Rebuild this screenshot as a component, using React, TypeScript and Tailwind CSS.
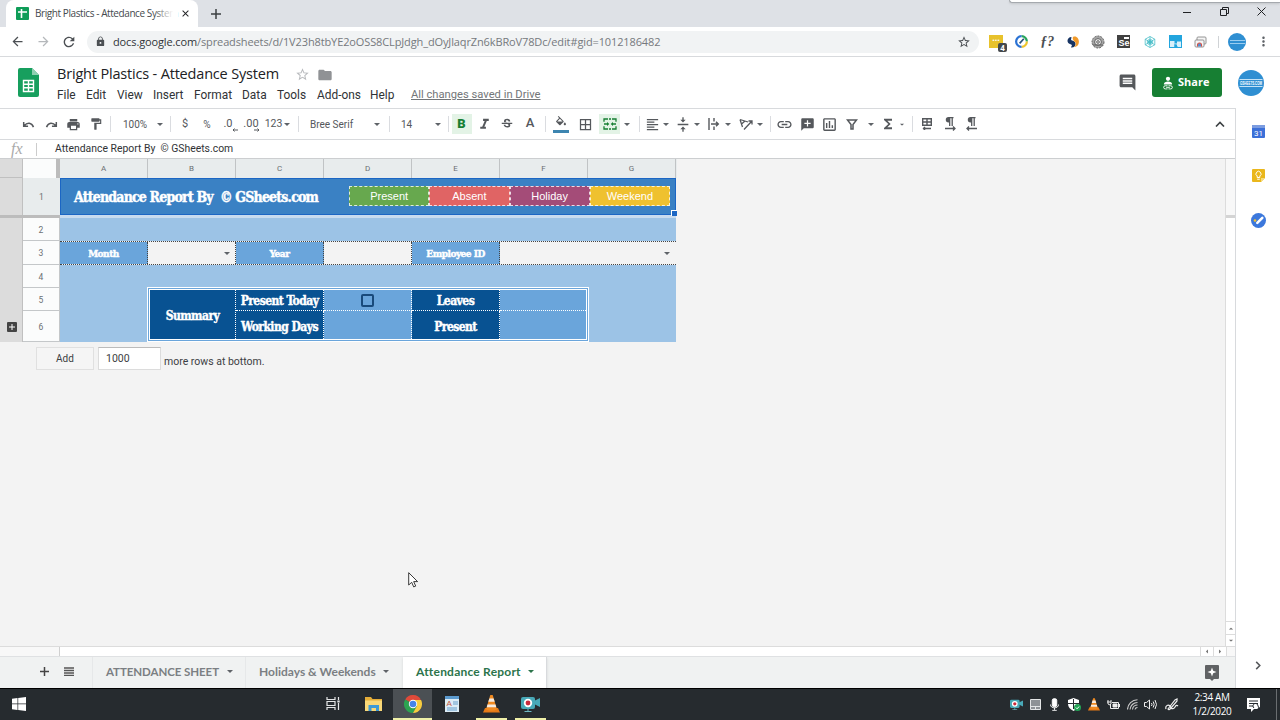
import type { ReactNode } from 'react';
import {
  MdAddComment,
  MdArrowBack,
  MdArrowForward,
  MdBorderAll,
  MdClose,
  MdComment,
  MdFolder,
  MdFormatAlignLeft,
  MdFormatItalic,
  MdFormatPaint,
  MdFunctions,
  MdInsertLink,
  MdLock,
  MdMoreVert,
  MdOutlineInsertChart,
  MdPrint,
  MdRefresh,
  MdStarBorder,
  MdStrikethroughS,
  MdVerticalAlignCenter,
} from 'react-icons/md';

const menus = [
  ['File', 'w-[29px]'],
  ['Edit', 'w-[31px]'],
  ['View', 'w-[36px]'],
  ['Insert', 'w-[41px]'],
  ['Format', 'w-[48px]'],
  ['Data', 'w-[35px]'],
  ['Tools', 'w-[40px]'],
  ['Add-ons', 'w-[53px]'],
  ['Help', 'w-[41px]'],
];

const legend = [
  ['Present', 'bg-[#67a84e]'],
  ['Absent', 'bg-[#e06464]'],
  ['Holiday', 'bg-[#a44c78]'],
  ['Weekend', 'bg-[#efc12f]'],
];

const slab = "font-['DejaVu_Serif_Condensed','DejaVu_Serif',serif] font-bold [-webkit-text-stroke:0.4px_white]";

function Cell({ w, children }: { w: string; children?: ReactNode }) {
  return <div className={`flex h-full shrink-0 items-center justify-center ${w}`}>{children}</div>;
}

function Caret({ className = 'text-[#5f6368]' }: { className?: string }) {
  return (
    <svg viewBox="0 0 6 3" className={`h-[3px] w-[6px] shrink-0 ${className}`}>
      <path d="M0 0h6L3 3z" fill="currentColor" />
    </svg>
  );
}

function Divider() {
  return <div className="h-4 w-px bg-[#dadce0]" />;
}

function Pilcrow({ arrow }: { arrow: string }) {
  return (
    <svg viewBox="0 0 12 14" className="h-[14px] w-3" fill="none" stroke="currentColor" strokeWidth="1.300">
      <path d="M6 0H4.500a2.700 2.700 0 0 0 0 5.400H6z" fill="currentColor" stroke="none" />
      <path d="M5.500.7H9.500M5.700 0v9M8.200 0v9" />
      <path d={arrow} />
    </svg>
  );
}

function BrowserTabs() {
  return (
    <div className="flex h-[27px] shrink-0 bg-[#dee1e6] pl-[6px]">
      <div className="flex h-full w-[192px] items-center rounded-t-lg bg-white pl-[10px] font-['Open_Sans',sans-serif] text-[10px] text-[#45494d]">
        <svg viewBox="0 0 13 13" className="mr-[6px] h-[13px] w-[13px] shrink-0">
          <rect width="13" height="13" rx="1" fill="#0f9d58" />
          <path d="M5.5 2v9M2 5h9" stroke="#fff" strokeWidth="1.6" />
        </svg>
        <div className="relative w-[142px] whitespace-nowrap tracking-[-0.42px]">
          Bright Plastics - Attedance System
          <div className="absolute inset-y-0 -right-px w-6 bg-gradient-to-l from-white from-20% to-transparent" />
        </div>
        <MdClose className="ml-[3px] h-[11px] w-[11px] text-[#202124]" />
      </div>
      <div className="flex w-9 items-center justify-center">
        <svg viewBox="0 0 10 10" className="h-[10px] w-[10px]">
          <path d="M5 0v10M0 5h10" stroke="#3c4043" strokeWidth="1.5" />
        </svg>
      </div>
      <div className="ml-auto flex items-center pr-[14px] pb-[4px] text-[#202124]">
        <svg viewBox="0 0 8 8" className="mr-[29px] h-2 w-2">
          <path d="M0 4.5h8" stroke="currentColor" />
        </svg>
        <svg viewBox="0 0 9 9" className="mr-[28px] h-[9px] w-[9px]" fill="none" stroke="currentColor">
          <path d="M.5 2.5h6v6h-6zM2.5 2.5v-2h6v6h-2" />
        </svg>
        <svg viewBox="0 0 9 9" className="h-[9px] w-[9px]">
          <path d="M.5.5l8 8M8.5.5l-8 8" stroke="currentColor" />
        </svg>
      </div>
    </div>
  );
}

function Extensions() {
  return (
    <div className="flex h-full items-center pr-[4.5px]">
      <Cell w="w-[25.6px]">
        <div className="relative h-[13px] w-[14px] bg-[#e8c22c] text-center text-[9px] leading-[10px] font-bold text-white">
          ···
          <span className="absolute top-[8px] left-[9px] h-[9px] w-[9px] rounded-[2px] bg-[#45494c] text-[8px] leading-[9px]">
            4
          </span>
        </div>
      </Cell>
      <Cell w="w-[25.6px]">
        <svg viewBox="0 0 14 14" className="h-[13px] w-[13px]" fill="none" strokeWidth="2.4">
          <path d="M7 1.2A5.8 5.8 0 0 1 12.8 7" stroke="#28a55b" />
          <path d="M12.8 7A5.8 5.8 0 0 1 7 12.8" stroke="#efc52d" />
          <path d="M7 12.8A5.8 5.8 0 0 1 7 1.2" stroke="#2a72d4" />
          <path d="M5 9l4.5-5" stroke="#284f78" strokeWidth="1.8" />
        </svg>
      </Cell>
      <Cell w="w-[25.6px]">
        <span className="font-['Liberation_Serif',serif] text-[14px] font-bold italic">ƒ?</span>
      </Cell>
      <Cell w="w-[25.6px]">
        <svg viewBox="0 0 12 12" className="h-3 w-3">
          <path d="M4.500 1C0 1-1 7 3 8l2 1-1 2.500c5 .5 6-5 2.500-6.500L4 4z" fill="#173463" />
          <path d="M6 1c4-2 7 3 5.500 7-1 3-4.500 3-4.500 3 2.500-2 2-4 1-5S5 3 6 1z" fill="#f19a2a" />
        </svg>
      </Cell>
      <Cell w="w-[25.6px]">
        <svg viewBox="0 0 14 14" className="h-[14px] w-[14px]" fill="none" stroke="#606060">
          <circle cx="7" cy="7" r="6" fill="#a5a5a5" strokeDasharray="2 1" />
          <circle cx="7" cy="7" r="3.4" fill="#eee" />
          <circle cx="7" cy="7" r="1.3" />
          <path d="M2 10h10" />
        </svg>
      </Cell>
      <Cell w="w-[25.6px]">
        <div className="relative h-[13px] w-[13px] bg-[#414141] font-['Liberation_Sans',sans-serif]">
          <span className="absolute bottom-0 left-[1px] text-[9px] leading-[9px] font-bold text-white">Se</span>
          <span className="absolute top-[2px] right-[1px] h-[2px] w-[5px] bg-white" />
        </div>
      </Cell>
      <Cell w="w-[25.6px]">
        <svg viewBox="0 0 12 12" className="h-3 w-3" fill="none" stroke="#4bbfc9">
          <circle cx="6" cy="6" r="1.5" fill="#4bbfc9" />
          <path d="M6 .5v11M1.2 3.2l9.6 5.6M1.2 8.8l9.6-5.6M6 .5l4.8 2.7v5.6L6 11.5 1.2 8.8V3.2zM6 3l2.6 1.5v3L6 9 3.4 7.5v-3z" strokeWidth=".8" />
        </svg>
      </Cell>
      <Cell w="w-[25.6px]">
        <svg viewBox="0 0 13 13" className="h-[13px] w-[13px]">
          <rect width="13" height="13" fill="#22a5de" />
          <path d="M1 6h4.500v2.500H8V6.500h4V12H8V9.500H5.500V12H1z" fill="#d9f0fa" />
          <path d="M5.500 8.500L9 12H5.500z" fill="#22a5de" />
        </svg>
      </Cell>
      <Cell w="w-[25.6px]">
        <svg viewBox="0 0 13 12" className="h-3 w-[13px]" stroke="#8b8b8b" strokeWidth=".9">
          <rect x="3" y="1" width="9" height="7" rx="1" fill="#f5f5f5" />
          <rect x="1" y="4" width="9" height="7" rx="1" fill="#f5f5f5" />
          <path d="M3.5 10.5V9a2 2 0 0 1 4 0v1.5" fill="#5090d8" stroke="#d85042" strokeWidth="1.1" />
        </svg>
      </Cell>
      <Cell w="w-[10px]">
        <div className="h-3 w-px bg-[#d0d3d6]" />
      </Cell>
      <Cell w="w-[27px]">
        <div className="flex h-[18px] w-[18px] flex-col items-center justify-center gap-[2px] rounded-full bg-[#2f8fd2]">
          <div className="h-px w-[15px] bg-[#9bcdf0]" />
          <div className="h-px w-[15px] bg-[#9bcdf0]" />
        </div>
      </Cell>
      <Cell w="w-[25px]">
        <MdMoreVert className="h-[15px] w-[15px] text-[#5f6368]" />
      </Cell>
    </div>
  );
}

function AddressBar() {
  return (
    <div className="flex h-[30px] shrink-0 items-center border-b border-[#d8dadd] bg-white pl-[10px] text-[#4b4f53]">
      <MdArrowBack className="h-[15px] w-[15px]" />
      <MdArrowForward className="ml-[11px] h-[15px] w-[15px] text-[#b5b8bb]" />
      <MdRefresh className="ml-[10px] h-[16px] w-[16px]" />
      <div className="ml-[10px] flex h-[22px] w-[892px] items-center rounded-full bg-[#f1f3f4] pl-[8px]">
        <MdLock className="mr-[7px] h-[11px] w-[11px]" />
        <span className="pt-px font-['Open_Sans',sans-serif] text-[11px] tracking-[-0.12px] whitespace-nowrap text-[#75797d]">
          <span className="text-[#303438]">docs.google.com</span>
          /spreadsheets/d/1V23h8tbYE2oOSS8CLpJdgh_dOyJlaqrZn6kBRoV78Dc/edit#gid=1012186482
        </span>
        <MdStarBorder className="mr-[8px] ml-auto h-[14px] w-[14px]" />
      </div>
      <div className="ml-auto h-full">
        <Extensions />
      </div>
    </div>
  );
}

function DocHeader() {
  return (
    <div className="flex h-[51px] shrink-0 items-start bg-white pl-[18px]">
      <svg viewBox="0 0 21 29" className="mt-[11px] h-[29px] w-[21px]">
        <path d="M2 0h12l7 7v20a2 2 0 0 1-2 2H2a2 2 0 0 1-2-2V2a2 2 0 0 1 2-2z" fill="#179f5e" />
        <path d="M14 0l7 7h-7z" fill="#8fd0b2" />
        <path d="M5.5 12.5h10v11h-10zM5.5 16.2h10M5.5 19.8h10M10.5 12.5v11" fill="none" stroke="#fff" strokeWidth="1.4" />
      </svg>
      <div className="ml-[18px] flex flex-col pt-[7px]">
        <div className="flex h-[21px] items-center">
          <span className="w-[238px] pb-px font-['Open_Sans',sans-serif] text-[14.5px] tracking-[-0.18px] whitespace-nowrap text-[#202124]">
            Bright Plastics - Attedance System
          </span>
          <MdStarBorder className="h-[15px] w-[15px] text-[#b8babd]" />
          <MdFolder className="ml-[7px] h-4 w-4 text-[#909295]" />
        </div>
        <div className="flex h-5 items-center pt-px font-['Roboto',sans-serif] text-[11.9px] text-[#303336]">
          {menus.map(([label, w]) => (
            <span key={label} className={`${w} whitespace-nowrap`}>
              {label}
            </span>
          ))}
          <span className="text-[11.2px] text-[#737679] underline">All changes saved in Drive</span>
        </div>
      </div>
      <div className="ml-auto flex h-full items-center pr-[16px]">
        <MdComment className="mr-[15px] h-[19px] w-[19px] text-[#55585b]" />
        <div className="flex h-[29px] w-[70px] items-center rounded-[3px] bg-[#177f33] pl-[10px] font-['Open_Sans',sans-serif] text-[11px] font-bold text-white">
          <svg viewBox="0 0 13 14" className="mr-[4px] h-[14px] w-[12px]">
            <circle cx="6.5" cy="2.5" r="2.3" fill="#fff" />
            <path d="M2 8.5c0-4 9-4 9 0z" fill="#fff" />
            <path d="M6 10H3.5a1.7 1.7 0 0 0 0 3.4H6M7 10h2.5a1.7 1.7 0 0 1 0 3.4H7M4.5 11.7h4" fill="none" stroke="#fff" />
          </svg>
          Share
        </div>
        <svg viewBox="0 0 26 26" className="ml-[16px] h-[26px] w-[26px]">
          <circle cx="13" cy="13" r="13" fill="#2f8fd2" />
          <path d="M1.500 9.500h23M1.500 16.500h23" stroke="#d6ebf9" strokeWidth=".9" />
          <text x="2" y="14.800" fill="#fff" fontSize="4.500" fontWeight="700" fontFamily="Liberation Sans" textLength="22" lengthAdjust="spacingAndGlyphs">
            GSHEETS.COM
          </text>
        </svg>
      </div>
    </div>
  );
}

function Toolbar() {
  const icon = 'h-[15px] w-[15px]';
  return (
    <div className="flex h-[32px] shrink-0 items-center border-y border-[#d8dadd] bg-white pl-4 font-['Roboto',sans-serif] text-[11px] text-[#55585c]">
      <Cell w="w-6">
        <svg viewBox="0 0 13 8" className="h-[7px] w-[13px]" fill="none" stroke="currentColor" strokeWidth="1.7">
          <path d="M1 1v5h5M1.5 5.5C5 1.500 10 1.500 12.200 7" />
        </svg>
      </Cell>
      <Cell w="w-[22px]">
        <svg viewBox="0 0 13 8" className="h-[7px] w-[13px]" fill="none" stroke="currentColor" strokeWidth="1.7">
          <path d="M12 1v5H7M11.500 5.500C8 1.500 3 1.500.8 7" />
        </svg>
      </Cell>
      <Cell w="w-[23px]"><MdPrint className={icon} /></Cell>
      <Cell w="w-[22px]"><MdFormatPaint className="h-[14px] w-[14px]" /></Cell>
      <Cell w="w-[6px]"><Divider /></Cell>
      <Cell w="w-[44px]"><span className="text-[10px]">100%</span></Cell>
      <Cell w="w-[6px]"><Caret /></Cell>
      <Cell w="w-[14px]"><Divider /></Cell>
      <Cell w="w-[16px]">$</Cell>
      <Cell w="w-[28px]"><span className="text-[10px]">%</span></Cell>
      <Cell w="w-[16px]">
        <div className="relative pr-[2px] text-[11px]">
          .0
          <svg viewBox="0 0 6 4" className="absolute right-[-3px] bottom-0 h-1 w-[6px]">
            <path d="M6 2H1M2.500.5L1 2l1.500 1.500" fill="none" stroke="currentColor" />
          </svg>
        </div>
      </Cell>
      <Cell w="w-[28px]">
        <div className="relative text-[11px]">
          .00
          <svg viewBox="0 0 6 4" className="absolute right-[-1px] bottom-0 h-1 w-[6px]">
            <path d="M0 2h5M3.500.5L5 2 3.500 3.500" fill="none" stroke="currentColor" />
          </svg>
        </div>
      </Cell>
      <Cell w="w-[17px]"><span className="text-[10.5px]">123</span></Cell>
      <Cell w="w-[9px]"><Caret /></Cell>
      <Cell w="w-[15px]"><Divider /></Cell>
      <div className="w-[60px] pl-[4px] text-[10px]">Bree Serif</div>
      <Cell w="w-[22px]"><Caret /></Cell>
      <Cell w="w-[2px]"><Divider /></Cell>
      <div className="w-[38px] pl-[11px] text-[10px]">14</div>
      <Cell w="w-[19px]"><Caret /></Cell>
      <Cell w="w-[2px]"><Divider /></Cell>
      <Cell w="w-[25px]">
        <div className="flex h-5 w-5 items-center justify-center bg-[#e3f3e6] text-[13px] font-black text-[#177f33]">B</div>
      </Cell>
      <Cell w="w-[21px]"><MdFormatItalic className="h-[17px] w-[17px]" /></Cell>
      <Cell w="w-6"><MdStrikethroughS className="h-[14px] w-[14px]" /></Cell>
      <Cell w="w-[22px]"><span className="pb-[2px] text-[13px] font-medium">A</span></Cell>
      <Cell w="w-[9px]"><Divider /></Cell>
      <Cell w="w-[22px]">
        <div className="flex w-4 flex-col items-center">
          <svg viewBox="0 0 24 20" className="h-[11px] w-[14px]" fill="currentColor">
            <path d="M16.560 8.940L7.620 0 6.210 1.410l2.380 2.380-5.150 5.150c-.59.590-.59 1.540 0 2.120l5.500 5.500c.29.290.68.440 1.060.440s.77-.15 1.060-.44l5.500-5.500c.59-.58.59-1.530 0-2.120zM5.210 10L10 5.210 14.790 10zM19 11.500s-2 2.170-2 3.500c0 1.100.9 2 2 2s2-.9 2-2c0-1.330-2-3.500-2-3.500z" />
          </svg>
          <div className="mt-[3px] h-[3px] w-4 bg-[#3d85b0]" />
        </div>
      </Cell>
      <Cell w="w-[27px]"><MdBorderAll className={icon} /></Cell>
      <Cell w="w-[21px]">
        <div className="flex h-5 w-full items-center justify-center bg-[#e3f3e6] text-[#177f33]">
          <svg viewBox="0 0 14 12" className="h-3 w-[14px]" fill="none" stroke="currentColor" strokeWidth="1.300">
            <path d="M1 3.800V1h4M9 1h4v2.800M1 8.200V11h4M9 11h4V8.200M1 6h4M13 6H9M6 1h2M6 11h2" />
            <path d="M4 4l2.300 2L4 8zM10 4L7.700 6 10 8z" fill="currentColor" stroke="none" />
          </svg>
        </div>
      </Cell>
      <Cell w="w-[14px]"><Caret /></Cell>
      <Cell w="w-[10px]"><Divider /></Cell>
      <Cell w="w-4"><MdFormatAlignLeft className={icon} /></Cell>
      <Cell w="w-[11px]"><Caret /></Cell>
      <div className="w-1" />
      <Cell w="w-4"><MdVerticalAlignCenter className="h-[17px] w-[17px]" /></Cell>
      <Cell w="w-[11px]"><Caret /></Cell>
      <div className="w-1" />
      <Cell w="w-4">
        <svg viewBox="0 0 12 12" className="h-3 w-3" fill="none" stroke="currentColor" strokeWidth="1.400">
          <path d="M1 0v12M6 0v3.500M6 8.500V12M3 6h7M8 3.800L10.300 6 8 8.200" />
        </svg>
      </Cell>
      <Cell w="w-[11px]"><Caret /></Cell>
      <div className="w-[5px]" />
      <Cell w="w-4">
        <svg viewBox="0 0 14 12" className="h-3 w-[14px]" fill="none" stroke="currentColor" strokeWidth="1.300">
          <path d="M1 1.500l8 2.500M1 1.500L3.500 9M6 3L2.500 6M5 11.500L12.500 3.500M9.500 3h3.500v3.500" />
        </svg>
      </Cell>
      <Cell w="w-[11px]"><Caret /></Cell>
      <Cell w="w-[10px]"><Divider /></Cell>
      <Cell w="w-[19px]"><MdInsertLink className="h-[17px] w-[17px]" /></Cell>
      <Cell w="w-[26px]"><MdAddComment className={`${icon} -scale-x-100`} /></Cell>
      <Cell w="w-[19px]"><MdOutlineInsertChart className="h-[17px] w-[17px]" /></Cell>
      <Cell w="w-[26px]">
        <svg viewBox="0 0 12 11" className="h-[11px] w-3" fill="none" stroke="currentColor" strokeWidth="1.500">
          <path d="M1.500 1h9L7 5.500V10H5V5.500z" />
        </svg>
      </Cell>
      <Cell w="w-[12px]"><Caret /></Cell>
      <Cell w="w-[21px]"><MdFunctions className="h-4 w-4" /></Cell>
      <Cell w="w-2"><Caret className="scale-75 text-[#5f6368]" /></Cell>
      <Cell w="w-3"><Divider /></Cell>
      <Cell w="w-[18px]">
        <svg viewBox="0 0 10 12" className="h-3 w-[10px]" fill="none" stroke="currentColor" strokeWidth="1.400">
          <path d="M.7.7h8.600v6.600H.7zM.7 4h8.600M5 .7V7M1 10.500h8M3 9l-1.500 1.500L3 12" />
        </svg>
      </Cell>
      <Cell w="w-[27px]"><Pilcrow arrow="M1 11.500h10M9 9.500l2 2-2 2" /></Cell>
      <Cell w="w-[17px]"><Pilcrow arrow="M1 11.500h10M3 9.500l-2 2 2 2" /></Cell>
      <svg viewBox="0 0 10 6" className="mr-[10px] ml-auto h-[6px] w-[10px]" fill="none" stroke="#3c4043" strokeWidth="1.600">
        <path d="M1 5.500l4-4 4 4" />
      </svg>
    </div>
  );
}

function RowHead({ children }: { children: ReactNode }) {
  return (
    <div className="flex items-center justify-center border-r border-b border-[#c4c7c9] bg-[#fbfcfc] pt-[2px] text-[8.5px] text-[#6b6f73]">
      {children}
    </div>
  );
}

function Sheet() {
  return (
    <div className="grid w-[677px] grid-cols-[23px_37px_617px] grid-rows-[19px_37px_3px_23px_24px_23px_23px_31px] font-['Roboto',sans-serif]">
      <div className="border-r border-b border-[#c0c0c0] bg-[#dcdcdc]" />
      <div className="border-r-4 border-[#bcbcbc] bg-[#fbfcfc]" />
      <div className="flex bg-[#e8eced]">
        {'ABCDEFG'.split('').map((c) => (
          <div key={c} className="flex w-[88px] items-center justify-center border-r border-[#c0c3c5] text-[8px] text-[#6b6f73]">
            {c}
          </div>
        ))}
      </div>

      <div className="border-r border-[#c0c0c0] bg-[#dcdcdc]" />
      <div className="flex items-center justify-center bg-[#e8eced] pt-px text-[8.5px] text-[#6b6f73]">1</div>
      <div className="relative flex w-[616px] items-center border border-[#1b66c4] bg-[#3a81c4] pl-[13px]">
        <span className={`${slab} w-[275px] pt-[2px] text-[14px] tracking-[-0.81px] whitespace-pre text-white`}>
          {'Attendance Report By  © GSheets.com'}
        </span>
        <div className="mb-px flex h-5 w-[321px] font-['Liberation_Sans',sans-serif] text-[11px] text-white">
          {legend.map(([label, bg]) => (
            <div key={label} className={`flex flex-1 items-center justify-center border border-dashed border-white/80 ${bg}`}>
              {label}
            </div>
          ))}
        </div>
        <div className="absolute -right-[2px] -bottom-[2px] z-10 h-[6px] w-[6px] border-t border-l border-white bg-[#1b66c4]" />
      </div>

      <div className="col-span-2 bg-[#bcbcbc]" />
      <div className="w-[616px] bg-[#c7dbef]" />

      <div className="border-r border-[#c0c0c0] bg-[#dcdcdc]" />
      <RowHead>2</RowHead>
      <div className="w-[616px] bg-[#9cc3e6]" />

      <div className="border-r border-[#c0c0c0] bg-[#dcdcdc]" />
      <RowHead>3</RowHead>
      <div className={`${slab} flex w-[616px] border-y border-dotted border-[#444] bg-[#f3f3f3] text-[10px] tracking-[-0.5px] text-white`}>
        <Cell w="w-[88px] bg-[#6aa5db] border-r border-dotted border-[#444]">Month</Cell>
        <div className="flex w-[88px] items-center justify-end border-r border-dotted border-[#444] pr-[5px]"><Caret /></div>
        <Cell w="w-[88px] bg-[#6aa5db] border-r border-dotted border-[#444]">Year</Cell>
        <Cell w="w-[88px] border-r border-dotted border-[#444]" />
        <Cell w="w-[88px] bg-[#6aa5db] border-r border-dotted border-[#444]">Employee ID</Cell>
        <div className="flex flex-1 items-center justify-end pr-[6px]"><Caret /></div>
      </div>

      <div className="border-r border-[#c0c0c0] bg-[#dcdcdc]" />
      <RowHead>4</RowHead>
      <div className="w-[616px] bg-[#9cc3e6]" />

      <div className="row-span-2 flex items-end justify-center border-r border-[#c0c0c0] bg-[#dcdcdc] pb-[10px] pl-px">
        <svg viewBox="0 0 10 10" className="h-[10px] w-[10px]">
          <rect width="10" height="10" rx="1" fill="#444" />
          <path d="M5 2v6M2 5h6" stroke="#fff" />
        </svg>
      </div>
      <RowHead>5</RowHead>
      <div className="row-span-2 w-[616px] bg-[#9cc3e6] pl-[87px]">
        <div className={`${slab} -mt-px grid h-[55px] w-[442px] grid-cols-[86px_88px_88px_88px_86px] grid-rows-[21px_28px] border-3 border-double border-white bg-[#6aa5db] text-[12px] tracking-[-0.55px] whitespace-nowrap text-white`}>
          <div className="row-span-2 flex items-center justify-center border-r border-dotted border-white bg-[#085292] pt-[2px]">Summary</div>
          <div className="flex items-center justify-center border-r border-b border-dotted border-white bg-[#085292] pt-px">Present Today</div>
          <div className="flex items-center justify-center border-r border-b border-dotted border-white">
            <div className="h-[13px] w-[13px] rounded-[2px] border-2 border-[#194a7b]" />
          </div>
          <div className="flex items-center justify-center border-r border-b border-dotted border-white bg-[#085292] pt-px">Leaves</div>
          <div className="border-b border-dotted border-white" />
          <div className="flex items-center justify-center border-r border-dotted border-white bg-[#085292] pt-[3px]">Working Days</div>
          <div className="border-r border-dotted border-white" />
          <div className="flex items-center justify-center border-r border-dotted border-white bg-[#085292] pt-[3px]">Present</div>
        </div>
      </div>
      <RowHead>6</RowHead>
    </div>
  );
}

function SidePanel() {
  return (
    <div className="flex w-[45px] shrink-0 flex-col items-center border-l border-[#d8dadd] bg-white pt-[17px]">
      <svg viewBox="0 0 13 13" className="h-[13px] w-[13px]">
        <rect width="13" height="13" rx="1" fill="#3c70d8" />
        <path d="M0 0h13v3H0z" fill="#7c9ce0" />
        <text x="6.500" y="10.500" fill="#fff" fontSize="8" textAnchor="middle" fontFamily="Roboto">31</text>
      </svg>
      <svg viewBox="0 0 13 13" className="mt-[31px] h-[13px] w-[13px]">
        <path d="M1 0h11a1 1 0 0 1 1 1v8l-4 4H1a1 1 0 0 1-1-1V1a1 1 0 0 1 1-1z" fill="#eab71c" />
        <path d="M13 9l-4 4V9z" fill="#f7dc7b" />
        <path d="M5.200 8.500V7a2.500 2.500 0 1 1 2.600 0v1.500zM5.200 10.200h2.600" fill="none" stroke="#fff" />
      </svg>
      <svg viewBox="0 0 15 15" className="mt-[31px] h-[15px] w-[15px]">
        <circle cx="7.500" cy="7.500" r="7.500" fill="#3c78dc" />
        <circle cx="4" cy="7.500" r="1.300" fill="#f3c12d" />
        <path d="M6.300 9.800l5-5" stroke="#fff" strokeWidth="2.600" strokeLinecap="round" />
      </svg>
      <svg viewBox="0 0 6 10" className="mt-auto mb-[18px] h-[9px] w-[6px]" fill="none" stroke="#55585b" strokeWidth="1.700">
        <path d="M1 1l4 4-4 4" />
      </svg>
    </div>
  );
}

function SheetTabs() {
  return (
    <div className="flex h-[32px] shrink-0 items-center border-t border-[#dfe1e3] bg-[#f0f2f2] pl-[40px] font-['Lato',sans-serif] text-[12px] font-bold text-[#7b7f83]">
      <svg viewBox="0 0 9 9" className="mb-[3px] h-[9px] w-[9px]"><path d="M4.500 0v9M0 4.500h9" stroke="#444" strokeWidth="1.500" /></svg>
      <svg viewBox="0 0 10 9" className="mb-[2px] ml-[15px] h-[9px] w-[10px]"><path d="M0 1h10M0 3.500h10M0 6h10M0 8.300h10" stroke="#555" strokeWidth="1.300" /></svg>
      <div className="ml-[18px] flex h-full w-[153px] items-center border-l border-[#e6e8e9] pb-[2px] pl-[13px]">
        <span className="w-[121px] text-[11.5px] tracking-[-0.07px] whitespace-nowrap">ATTENDANCE SHEET</span>
        <Caret />
      </div>
      <div className="flex h-full w-[158px] items-center border-l border-[#e6e8e9] pb-[2px] pl-[13px]">
        <span className="w-[124px] whitespace-nowrap">Holidays &amp; Weekends</span>
        <Caret />
      </div>
      <div className="flex h-full w-[144px] items-center border-r border-[#d8dadd] bg-white pb-[2px] pl-[13px] text-[#2c744b] shadow-sm">
        <span className="w-[112px] tracking-[0.22px] whitespace-nowrap">Attendance Report</span>
        <Caret className="text-[#2c744b]" />
      </div>
      <svg viewBox="0 0 14 16" className="mr-[16px] ml-auto h-4 w-[14px]">
        <path d="M1 0h12a1 1 0 0 1 1 1v12a1 1 0 0 1-1 1H9l-2 2-2-2H1a1 1 0 0 1-1-1V1a1 1 0 0 1 1-1z" fill="#606264" />
        <path d="M7 2.500l1.200 3.300 3.300 1.200-3.300 1.200L7 11.500 5.800 8.200 2.500 7l3.300-1.200z" fill="#fff" />
      </svg>
    </div>
  );
}

function Cone({ className }: { className: string }) {
  return (
    <svg viewBox="0 0 17 18" className={className}>
      <path d="M2 13h13l2 4.500H0z" fill="#e67a17" />
      <path d="M7.300 0h2.400L14 14.500Q8.500 17 3 14.500z" fill="#f08a20" />
      <path d="M6.400 3.500h4.200l1.100 3.300H5.300zM4.500 9.500h8l.8 2.800H3.700z" fill="#f5ece2" />
    </svg>
  );
}

function Camera({ className }: { className: string }) {
  return (
    <svg viewBox="0 0 19 16" className={className}>
      <rect x="0" y="1" width="14" height="12" rx="2" fill="#48a9b8" />
      <path d="M13 5l6-3v9l-6-3z" fill="#48a9b8" />
      <circle cx="7" cy="7" r="4.200" fill="#fff" />
      <circle cx="7" cy="7" r="2.400" fill="#c92b3c" />
      <path d="M3.500 15.500h7M7 13v3" stroke="#6fb9c5" />
    </svg>
  );
}

function Taskbar() {
  const app = 'relative flex h-full w-[39.3px] items-center justify-center pb-[2px]';
  return (
    <div className="flex h-8 shrink-0 items-center border-t border-black bg-[#262b2f] text-white">
      <svg viewBox="0 0 14 14" className="mb-[2px] ml-[12px] h-[14px] w-[14px]" fill="#fff">
        <path d="M0 1.800l5.500-.8v5.600H0zM6.200.9L14 0v6.600H6.200zM0 7.300h5.500V13L0 12.200zM6.200 7.300H14V14l-7.800-1z" />
      </svg>
      <div className="ml-[288.5px] flex h-full">
        <div className={`${app} pr-[3px]`}>
          <svg viewBox="0 0 14 13" className="h-[13px] w-[14px]" fill="none" stroke="#e5e7e8" strokeWidth="1.200">
            <path d="M1 0v2.500h8V0M1 13v-2.500h8V13M1 4.500h8v4H1zM12.500 0v3M12.500 6v7" />
            <path d="M11.300 4.500h2.400" strokeWidth="2" />
          </svg>
        </div>
        <div className={app}>
          <svg viewBox="0 0 17 15" className="h-[15px] w-[17px]">
            <path d="M0 1h6l1.500 2H17v12H0z" fill="#e4ad39" />
            <path d="M0 4.500h17V15H0z" fill="#f9d878" />
            <path d="M3.500 15V9h10.500v6h-3v-3h-4.500v3z" fill="#3d9ad6" />
          </svg>
        </div>
        <div className={`${app} bg-[#4b5054]`}>
          <svg viewBox="0 0 18 18" className="h-[18px] w-[18px]">
            <path d="M9 9L1.200 4.500A9 9 0 0 1 16.800 4.500z" fill="#df4a3a" />
            <path d="M9 9L1.200 4.500A9 9 0 0 0 9 18l4-6.700z" fill="#2da350" />
            <path d="M9 9V5h8.100A9 9 0 0 1 9 18l3.900-7z" fill="#f7cc3f" />
            <circle cx="9" cy="9" r="4.200" fill="#fff" />
            <circle cx="9" cy="9" r="3.300" fill="#4584ea" />
          </svg>
          <div className="absolute inset-x-0 bottom-0 h-[2px] bg-[#eff0a8]" />
        </div>
        <div className={app}>
          <svg viewBox="0 0 14 16" className="h-4 w-[14px]">
            <rect width="14" height="16" fill="#dcecf6" />
            <path d="M0 0h14v3H0z" fill="#5c9bcf" />
            <path d="M8 6h5M8 8h5M2 12h10M2 14h10" stroke="#659dcb" />
            <text x="1.500" y="10" fill="#c65b3c" fontSize="8" fontFamily="Liberation Sans">A</text>
          </svg>
        </div>
        <div className={app}>
          <Cone className="h-[18px] w-[17px]" />
          <div className="absolute inset-x-[4px] bottom-0 h-[2px] bg-[#eff0a8]" />
        </div>
        <div className={app}>
          <Camera className="h-4 w-[19px]" />
          <div className="absolute inset-x-[4px] bottom-0 h-[2px] bg-[#eff0a8]" />
        </div>
      </div>

      <div className="ml-auto flex h-full items-center">
        <Cell w="w-[20px]"><Camera className="h-[11px] w-[13px]" /></Cell>
        <Cell w="w-[19px]">
          <svg viewBox="0 0 11 11" className="h-[11px] w-[11px]"><path d="M.5.5h10v10H.5z" fill="#8e9296" stroke="#e3e5e6" /><path d="M1 7.500h9M5.500 8v2" stroke="#e3e5e6" /></svg>
        </Cell>
        <Cell w="w-[19px]">
          <svg viewBox="0 0 10 14" className="h-[13px] w-[9px]" fill="none" stroke="#fff">
            <rect x="2.500" y=".5" width="5" height="9" rx="2" fill="#fff" />
            <path d="M.5 7c0 5 9 5 9 0M5 10.500V13M2.500 13.500h5" />
          </svg>
        </Cell>
        <Cell w="w-[20px]">
          <svg viewBox="0 0 13 13" className="h-[13px] w-[13px]">
            <path d="M5.500 0l5.500 2v4c0 3-2 5-5.500 7C2 11 0 9 0 6V2z" fill="#fff" />
            <path d="M5.500 1v10M0 5.500h11" stroke="#262b2f" />
            <circle cx="9.500" cy="9.500" r="3.500" fill="#23a455" />
            <path d="M7.800 9.500l1.300 1.300 2-2.300" fill="none" stroke="#fff" />
          </svg>
        </Cell>
        <Cell w="w-[19px]"><Cone className="h-[13px] w-[12px]" /></Cell>
        <Cell w="w-[20px]">
          <svg viewBox="0 0 13 10" className="h-[10px] w-[13px]" fill="none" stroke="#eee">
            <path d="M5 2.500h6.500v6H3.500V5M12.500 4v3M0 2h4M1 0v4l2 1 1-1V0" />
            <path d="M6 4h4v3H6z" fill="#eee" />
          </svg>
        </Cell>
        <Cell w="w-[18px]">
          <svg viewBox="0 0 11 11" className="h-[11px] w-[11px]" fill="none" stroke="#ccc" strokeWidth="1.100">
            <path d="M.5 10.500A10 10 0 0 1 10.500.8M3 10.500a7.500 7.500 0 0 1 7.500-7M5.500 10.500a5 5 0 0 1 5-4.500M8 10.500a2.500 2.500 0 0 1 2.500-2" />
          </svg>
        </Cell>
        <Cell w="w-[18px]">
          <svg viewBox="0 0 13 11" className="h-[11px] w-[13px]" fill="none" stroke="#eee">
            <path d="M.5 3.500h2L5.500 1v9L2.500 7.500h-2zM7.500 4q1 1.500 0 3M9.200 2.500q2 3 0 6M11 1q3 4.500 0 9" />
          </svg>
        </Cell>
        <Cell w="w-[26px]">
          <svg viewBox="0 0 14 13" className="h-[13px] w-[14px]" fill="none" stroke="#eee" strokeWidth="1.200">
            <path d="M1 11c-1-3 2-5 4-3s-1 5-2 3L10 2l2-1v2L6 10c1 1 3 1 4-1s2-2 3-1" />
          </svg>
        </Cell>
        <div className="w-[54px] pb-[2px] text-center font-['Open_Sans',sans-serif] text-[10px] leading-[14px] tracking-[-0.36px] whitespace-nowrap">
          <div>2:34 AM</div>
          <div>1/2/2020</div>
        </div>
        <Cell w="w-[30px]">
          <svg viewBox="0 0 14 14" className="h-[14px] w-[14px]">
            <path d="M0 0h13v9l-3 2H7l-3 3v-3H0z" fill="#fff" />
            <path d="M2 3h9M2 5.500h9M2 8h4" stroke="#262b2f" />
            <path d="M7 10a2.500 2.500 0 1 1 4-2l2 4H9" fill="none" stroke="#262b2f" />
          </svg>
        </Cell>
        <div className="ml-[7px] h-full w-px bg-[#6a6e71]" />
        <div className="w-[3px]" />
      </div>
    </div>
  );
}

function VerticalScroll() {
  return (
    <div className="flex w-[10px] shrink-0 flex-col border-l border-[#dcdcdc] bg-white">
      <div className="h-[56px] bg-[#f8f8f8]" />
      <div className="h-[3px] bg-[#d4d4d4]" />
      <div className="mt-auto flex h-[13px] items-center justify-center border-t border-[#dcdcdc]">
        <Caret className="rotate-180 scale-75 text-[#777]" />
      </div>
      <div className="flex h-[12px] items-center justify-center border-t border-[#dcdcdc]">
        <Caret className="scale-75 text-[#777]" />
      </div>
    </div>
  );
}

export default function App() {
  return (
    <div className="relative flex h-[720px] w-[1280px] flex-col overflow-hidden bg-white">
      <BrowserTabs />
      <AddressBar />
      <DocHeader />
      <div className="flex min-h-0 flex-1">
        <div className="flex w-[1235px] flex-col">
          <Toolbar />
          <div className="flex h-[19px] shrink-0 items-center border-b border-[#ccced0] bg-white pl-[11px] font-['Roboto',sans-serif] text-[10.4px] text-[#303336]">
            <span className="w-[25px] font-['Liberation_Serif',serif] text-[16px] text-[#aaa] italic">fx</span>
            <div className="h-[13px] w-px bg-[#ccc]" />
            <span className="ml-[18px] whitespace-pre">{'Attendance Report By  © GSheets.com'}</span>
          </div>
          <div className="flex min-h-0 flex-1">
            <div className="flex-1 bg-[#f3f3f3]">
              <Sheet />
              <div className="flex items-start pt-[5px] pl-9 font-['Roboto',sans-serif] text-[10.5px] text-[#3c4043]">
                <div className="flex h-[23px] w-[58px] items-center justify-center border border-[#e0e0e0] bg-[#f5f5f5] text-[10px]">Add</div>
                <div className="ml-1 flex h-[23px] w-[63px] items-center border border-[#dcdcdc] border-t-[#bbb] bg-white pl-[7px]">1000</div>
                <span className="ml-[3px] pt-[7px]">more rows at bottom.</span>
              </div>
            </div>
            <VerticalScroll />
          </div>
          <div className="flex h-[10px] shrink-0 border-t border-[#dcdcdc] bg-white">
            <div className="w-[60px] border-r border-[#d0d0d0] bg-[#f8f8f8]" />
            <div className="flex-1" />
            <div className="flex w-[13px] items-center justify-center border-l border-[#dcdcdc]">
              <Caret className="rotate-90 scale-75 text-[#777]" />
            </div>
            <div className="flex w-[13px] items-center justify-center border-l border-[#dcdcdc]">
              <Caret className="-rotate-90 scale-75 text-[#777]" />
            </div>
            <div className="w-[9px] border-l border-[#dcdcdc] bg-[#f8f8f8]" />
          </div>
          <SheetTabs />
        </div>
        <SidePanel />
      </div>
      <Taskbar />

      {/* edge of a window parked above the browser */}
      <div className="absolute top-0 right-0 h-[3px] w-[271px] rounded-bl-sm border-b border-l border-[#a5a9ae] bg-white shadow" />

      <svg viewBox="0 0 10 16" className="absolute top-[572px] left-[408px] h-4 w-[10px]">
        <path d="M.7.700v12.300l3-2.700 2 4.600 2-.8-2-4.500h3.900z" fill="#fff" stroke="#222" strokeWidth=".9" />
      </svg>
    </div>
  );
}
